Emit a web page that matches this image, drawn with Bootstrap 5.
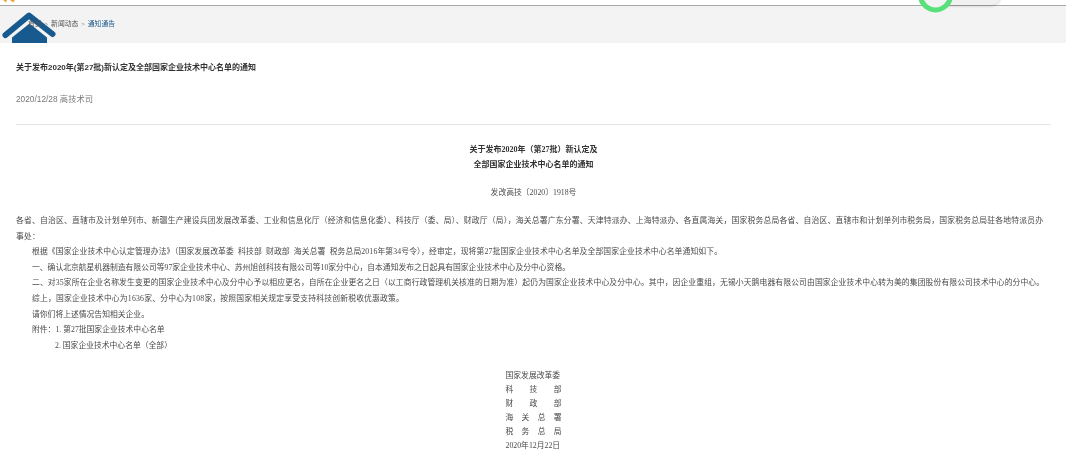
<!DOCTYPE html>
<html lang="zh">
<head>
<meta charset="utf-8">
<title>通知通告</title>
<link rel="stylesheet" href="https://cdn.jsdelivr.net/npm/bootstrap@5.3.0/dist/css/bootstrap.min.css">
<style>
html, body { height: 467px; overflow: hidden; }
body { font-family: "Liberation Sans", "Noto Sans CJK SC", sans-serif; background: #fff; color: #444; font-size: 8px; position: relative; }
.top-strip { height: 6px; background: #fff; border-bottom: 1.5px solid #a8a8a8; }
.crumb-bar { height: 37px; background: #f3f3f3; padding-left: 28px; padding-bottom: 1px; color: #555; font-size: 6.8px; gap: 2px; position: relative; }
.crumb-bar .here { color: #1c5a8c; }
.crumb-bar .sep { color: #888; margin: 0 1px; font-size: 6px; }
.crumb-bar span { position: relative; z-index: 2; filter: blur(.3px); }
.house { position: absolute; left: 0; top: 6px; width: 60px; height: 37px; filter: blur(.5px); z-index: 1; }
.orange-mark { position: absolute; left: 3px; top: 0; width: 12px; height: 3px; }
.ring { position: absolute; left: 915px; top: -6px; width: 42px; height: 21px; overflow: visible; filter: blur(.5px); }
.pill { position: absolute; left: 940px; top: -10px; width: 61px; height: 15px; background: #f1f1f1; border-radius: 0 0 10px 10px; box-shadow: 0 1px 3px rgba(0,0,0,.18); }
.main-wrap { padding: 0 15px 0 16px; filter: blur(.3px); }
.doc-title { font-size: 8px; font-weight: 700; color: #333; margin: 0; padding-top: 20px; line-height: 10px; }
.doc-meta { color: #777; font-size: 8.3px; margin: 0; padding-top: 21px; line-height: 10px; }
.doc-rule { margin: 20px 0 0; border: 0; border-top: 1px solid #e4e4e4; opacity: 1; }
.doc-body { font-size: 7.8px; line-height: 15.6px; color: #4a4a4a; font-family: "Liberation Serif", "Noto Sans CJK SC", sans-serif; }
.doc-body p { margin: 0; }
.doc-head { font-weight: 700; color: #333; text-align: center; margin: 17px 0 0; line-height: 15px; font-size: 8px; }
.doc-body .doc-no { text-align: center; margin-top: 12.5px; }
.ind { padding-left: 16px; }
.ind2 { padding-left: 39px; }
.doc-body .addr { margin-top: 13px; padding-right: 5px; letter-spacing: .195px; }
.ls-a { letter-spacing: .12px; }
.ls-b { letter-spacing: .11px; }
.ls-c { letter-spacing: .19px; }
.signers { width: 56px; margin: 15.5px auto 0; line-height: 14px; }
.signers .spread { text-align: justify; text-align-last: justify; }
</style>
</head>
<body>
<div class="top-strip"></div>
<nav class="crumb-bar d-flex align-items-center">
  <span>首页</span><span class="sep">&gt;</span><span>新闻动态</span><span class="sep">&gt;</span><span class="here">通知通告</span>
</nav>

<svg class="orange-mark" viewBox="0 0 12 3"><path d="M0 0h4l-1 2.5zM7 0h5l-2 2.5z" fill="#eca33c"/></svg>
<svg class="house" viewBox="0 6 60 37"><path d="M5.5 35 L29 15.5 L52.5 34" fill="none" stroke="#175a8f" stroke-width="6" stroke-linecap="round" stroke-linejoin="round"/><path d="M12 43 V37.5 L29.5 23.5 L47 37.5 V43 Z" fill="#175a8f"/></svg>
<div class="pill"></div>
<svg class="ring" viewBox="0 0 42 21"><circle cx="20.5" cy="1" r="15" fill="#f3f3f3" stroke="#58e07a" stroke-width="5"/></svg>

<main class="main-wrap">
  <h1 class="doc-title">关于发布2020年(第27批)新认定及全部国家企业技术中心名单的通知</h1>
  <p class="doc-meta">2020/12/28 高技术司</p>
  <hr class="doc-rule">
  <article class="doc-body">
    <div class="doc-head">关于发布2020年（第27批）新认定及<br>全部国家企业技术中心名单的通知</div>
    <p class="doc-no">发改高技〔2020〕1918号</p>
    <p class="addr">各省、自治区、直辖市及计划单列市、新疆生产建设兵团发展改革委、工业和信息化厅（经济和信息化委）、科技厅（委、局）、财政厅（局），海关总署广东分署、天津特派办、上海特派办、各直属海关，国家税务总局各省、自治区、直辖市和计划单列市税务局，国家税务总局驻各地特派员办事处：</p>
    <p class="ind ls-a">根据《国家企业技术中心认定管理办法》（国家发展改革委&nbsp;&nbsp;科技部&nbsp;&nbsp;财政部&nbsp;&nbsp;海关总署&nbsp;&nbsp;税务总局2016年第34号令），经审定，现将第27批国家企业技术中心名单及全部国家企业技术中心名单通知如下。</p>
    <p class="ind">一、确认北京航星机器制造有限公司等97家企业技术中心、苏州旭创科技有限公司等10家分中心，自本通知发布之日起具有国家企业技术中心及分中心资格。</p>
    <p class="ind ls-b">二、对35家所在企业名称发生变更的国家企业技术中心及分中心予以相应更名，自所在企业更名之日（以工商行政管理机关核准的日期为准）起仍为国家企业技术中心及分中心。其中，因企业重组，无锡小天鹅电器有限公司由国家企业技术中心转为美的集团股份有限公司技术中心的分中心。</p>
    <p class="ind ls-c">综上，国家企业技术中心为1636家、分中心为108家，按照国家相关规定享受支持科技创新税收优惠政策。</p>
    <p class="ind">请你们将上述情况告知相关企业。</p>
    <p class="ind">附件：1. 第27批国家企业技术中心名单</p>
    <p class="ind2">2. 国家企业技术中心名单（全部）</p>
    <div class="signers">
      <div>国家发展改革委</div>
      <div class="spread">科 技 部</div>
      <div class="spread">财 政 部</div>
      <div class="spread">海 关 总 署</div>
      <div class="spread">税 务 总 局</div>
      <div>2020年12月22日</div>
    </div>
  </article>
</main>
<script src="https://cdn.jsdelivr.net/npm/bootstrap@5.3.0/dist/js/bootstrap.bundle.min.js"></script>
</body>
</html>
